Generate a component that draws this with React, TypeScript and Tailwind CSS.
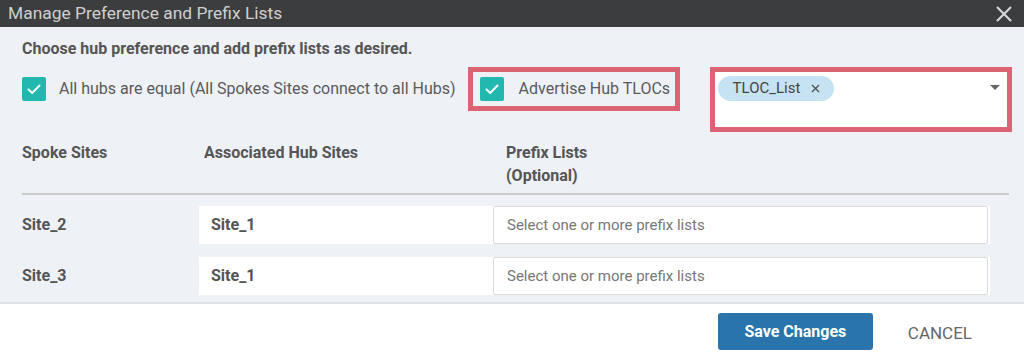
import React from "react";

const Check = () => (
  <div className="w-[24px] h-[24px] rounded-[2px] bg-[#22b8b0] flex items-center justify-center shrink-0">
    <svg width="16" height="16" viewBox="0 0 16 16" fill="none">
      <path d="M2.5 8.5 L6.2 12 L13.5 4.5" stroke="white" strokeWidth="2" strokeLinecap="round" strokeLinejoin="round" />
    </svg>
  </div>
);

const Row = ({ spoke }: { spoke: string }) => (
  <div className="flex items-center h-[38px]">
    <div className="w-[199px] pl-[22px] text-[16px] font-bold text-[#555]">{spoke}</div>
    <div className="w-[294px] h-full bg-white flex items-center pl-[12px] text-[16px] font-bold text-[#555]">Site_1</div>
    <div className="w-[497px] h-full bg-white pr-[2px]">
      <div className="h-full border border-[#dcdcdc] rounded-[2px] flex items-center pl-[13px] text-[15px] text-[#777]">
        Select one or more prefix lists
      </div>
    </div>
  </div>
);

export default function App() {
  return (
    <div className="w-[1024px] h-[358px] flex flex-col bg-white" style={{ fontFamily: "Roboto, 'Liberation Sans', sans-serif" }}>
      <div className="h-[27px] bg-[#3c3d3f] flex items-center justify-between pl-[8px] pr-[10px]">
        <span className="text-[17.4px] text-[#cfcfcf]">Manage Preference and Prefix Lists</span>
        <svg width="20" height="20" viewBox="0 0 20 20">
          <path d="M3 3 L17 17 M17 3 L3 17" stroke="#d6d6d6" strokeWidth="2.2" />
        </svg>
      </div>
      <div className="h-[277px] bg-[#eef1f6] border-b-[2px] border-[#e0e3e8] flex flex-col">
        <div className="pl-[22px] pt-[10px] h-[40px] text-[16px] font-bold text-[#555]">
          Choose hub preference and add prefix lists as desired.
        </div>
        <div className="flex items-start">
          <div className="flex items-center pl-[22px] h-[44px]">
            <Check />
            <span className="ml-[13px] text-[16px] text-[#5a5a5a]">All hubs are equal (All Spokes Sites connect to all Hubs)</span>
          </div>
          <div className="ml-[12px] w-[212px] h-[44px] border-[5px] border-[#dc6373] flex items-center pl-[7px]">
            <div className="w-full h-full bg-[#eef1f6] flex items-center">
              <Check />
              <span className="ml-[15px] text-[16px] text-[#5a5a5a]">Advertise Hub TLOCs</span>
            </div>
          </div>
          <div className="ml-[30px] w-[302px] h-[65px] border-[5px] border-[#dc6373] bg-white flex items-start justify-between pl-[3px] pt-[4px] pr-[6px]">
            <div className="h-[25px] rounded-full bg-[#c6e3f3] flex items-center pl-[15px] pr-[14px] text-[15px] text-[#444]">
              <span>TLOC_List</span>
              <svg className="ml-[11px]" width="9" height="9" viewBox="0 0 9 9">
                <path d="M1 1 L8 8 M8 1 L1 8" stroke="#555" strokeWidth="1.4" />
              </svg>
            </div>
            <svg className="mt-[8px]" width="12" height="8" viewBox="0 0 12 8">
              <path d="M1 1 L11 1 L6 6 Z" fill="#666" />
            </svg>
          </div>
        </div>
        <div className="flex pt-[9px] text-[16px] font-bold text-[#555] leading-[23px]">
          <div className="w-[204px] pl-[22px]">Spoke Sites</div>
          <div className="w-[302px]">Associated Hub Sites</div>
          <div>Prefix Lists<br />(Optional)</div>
        </div>
        <div className="ml-[22px] w-[987px] mt-[6px] h-[2px] bg-[#cacaca]" />
        <div className="mt-[11px] flex flex-col gap-[13px]">
          <Row spoke="Site_2" />
          <Row spoke="Site_3" />
        </div>
      </div>
      <div className="flex-1 flex items-start justify-end pt-[9px] pr-[52px]">
        <button className="w-[155px] h-[37px] bg-[#2874ab] rounded-[3px] text-white font-bold text-[16px]">Save Changes</button>
        <span className="ml-[35px] mt-[8px] text-[17px] text-[#666]">CANCEL</span>
      </div>
    </div>
  );
}
